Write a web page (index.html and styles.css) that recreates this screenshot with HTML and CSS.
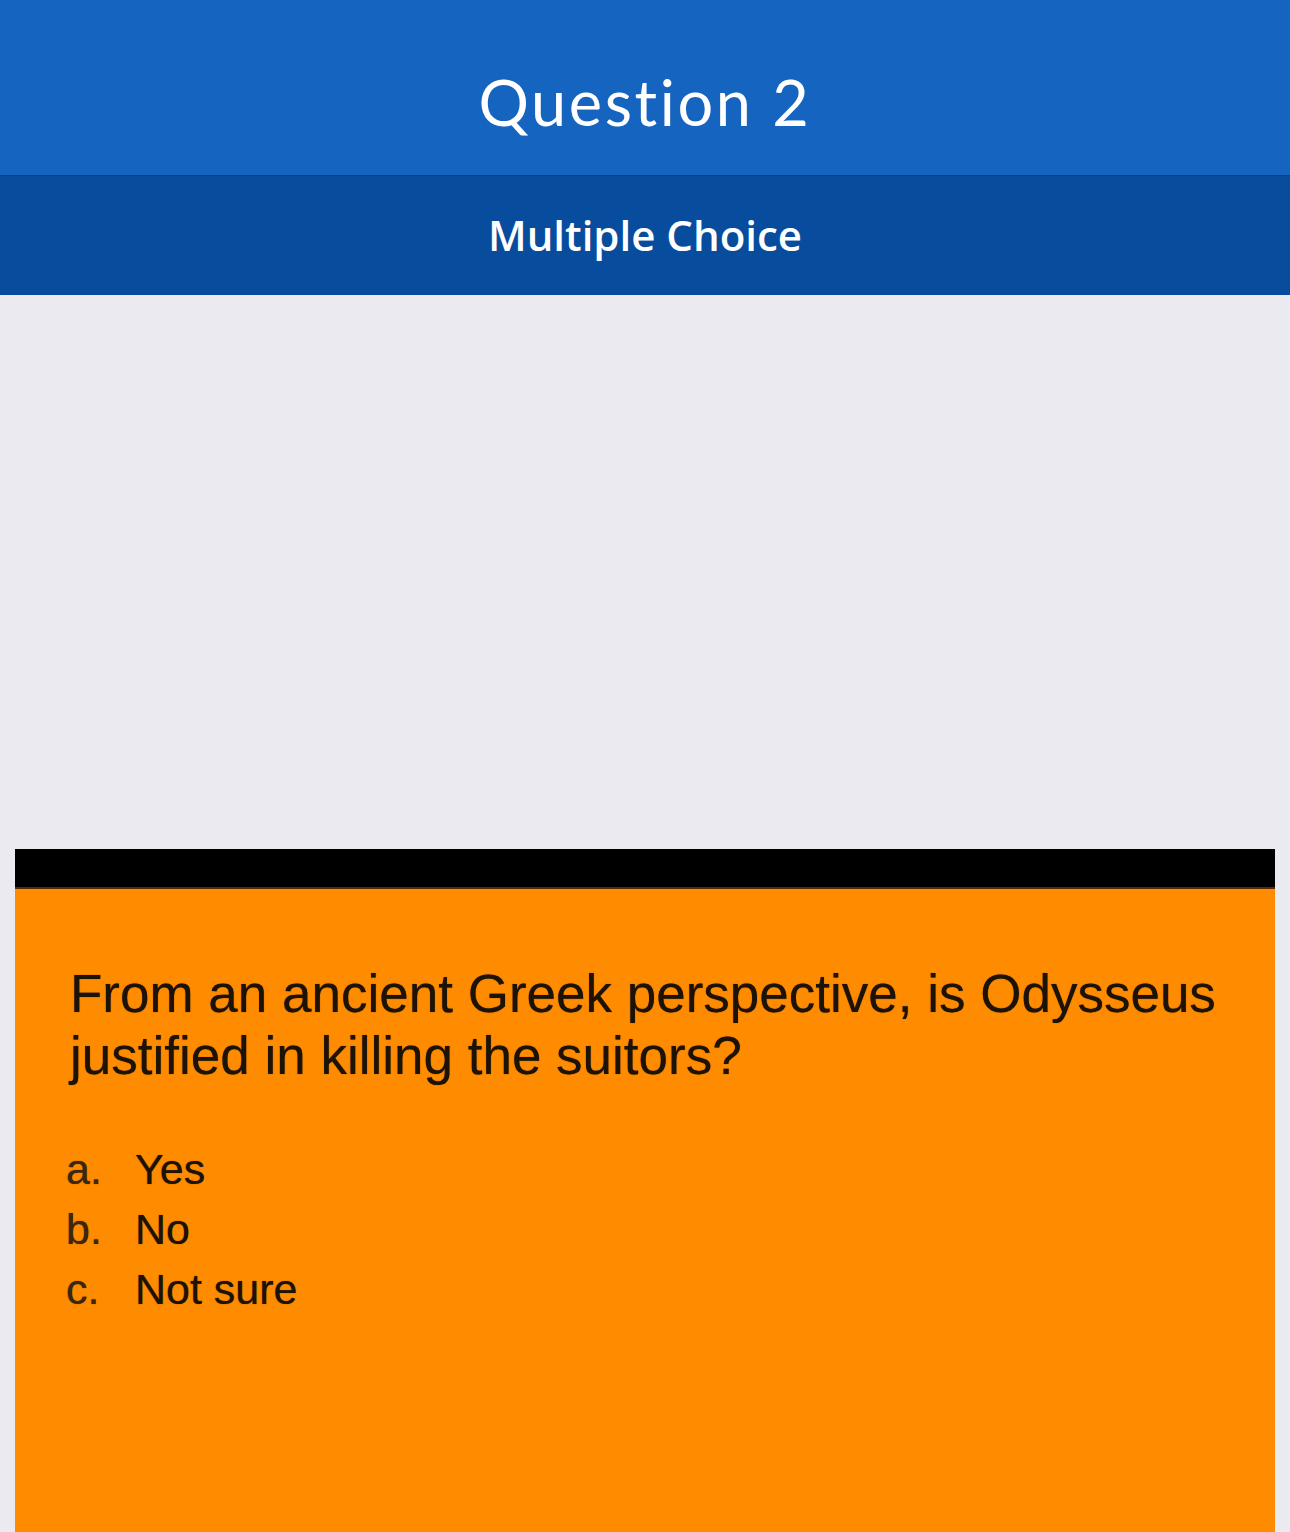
FILE: index.html
```html
<!DOCTYPE html>
<html lang="en">
<head>
<meta charset="utf-8">
<title>Question 2</title>
<link rel="stylesheet" href="styles.css">
</head>
<body>
<header class="title-bar">
  <h1 class="title">Question 2</h1>
</header>
<div class="type-bar">
  <h2 class="type">Multiple Choice</h2>
</div>
<main class="content">
  <div class="spacer"></div>
  <section class="slide">
    <div class="slide-top"></div>
    <div class="slide-body">
      <p class="question">From an ancient Greek perspective, is Odysseus justified in killing the suitors?</p>
      <ol class="options">
        <li><span class="letter">a.</span><span class="opt">Yes</span></li>
        <li><span class="letter">b.</span><span class="opt">No</span></li>
        <li><span class="letter">c.</span><span class="opt">Not sure</span></li>
      </ol>
    </div>
  </section>
</main>
</body>
</html>
```
FILE: styles.css
```css
html, body {
  margin: 0;
  padding: 0;
}
body {
  background: #ebeaf0;
  font-family: "Open Sans", "Liberation Sans", sans-serif;
  height: 1532px;
  overflow: hidden;
}
.title-bar {
  background: #1565c0;
  height: 175px;
  border-bottom: 1px solid #0b3f82;
  display: flex;
  align-items: center;
  justify-content: center;
}
.title {
  margin: 0;
  color: #fff;
  font-family: "Lato", "Open Sans", sans-serif;
  font-weight: 400;
  font-size: 63px;
  letter-spacing: 2.6px;
  line-height: 1;
  padding-top: 28px;
}
.type-bar {
  background: #074c9d;
  height: 119px;
  display: flex;
  align-items: center;
  justify-content: center;
}
.type {
  margin: 0;
  color: #fff;
  font-family: "Open Sans", sans-serif;
  font-weight: 600;
  font-size: 42px;
  line-height: 1;
  padding-bottom: 2px;
}
.content {
  padding: 0 15px;
}
.spacer {
  height: 554px;
}
.slide {
  background: #ff8c00;
  height: 683px;
}
.slide-top {
  height: 38px;
  background: #000;
  border-bottom: 2px solid #5a2a00;
}
.slide-body {
  padding: 74px 0 0 55px;
  color: #1d1206;
  font-family: "Liberation Sans", Arial, sans-serif;
  text-shadow: 0 0 1px rgba(30, 15, 0, 0.7);
}
.question {
  margin: 0;
  font-size: 53px;
  line-height: 62px;
  width: 1180px;
}
.options {
  list-style: none;
  margin: 52px 0 0 -4px;
  padding: 0;
  font-size: 43px;
  line-height: 60px;
}
.options li {
  display: flex;
}
.letter {
  width: 69px;
  color: #3b2610;
}
.opt {
  color: #1d1206;
}
```
